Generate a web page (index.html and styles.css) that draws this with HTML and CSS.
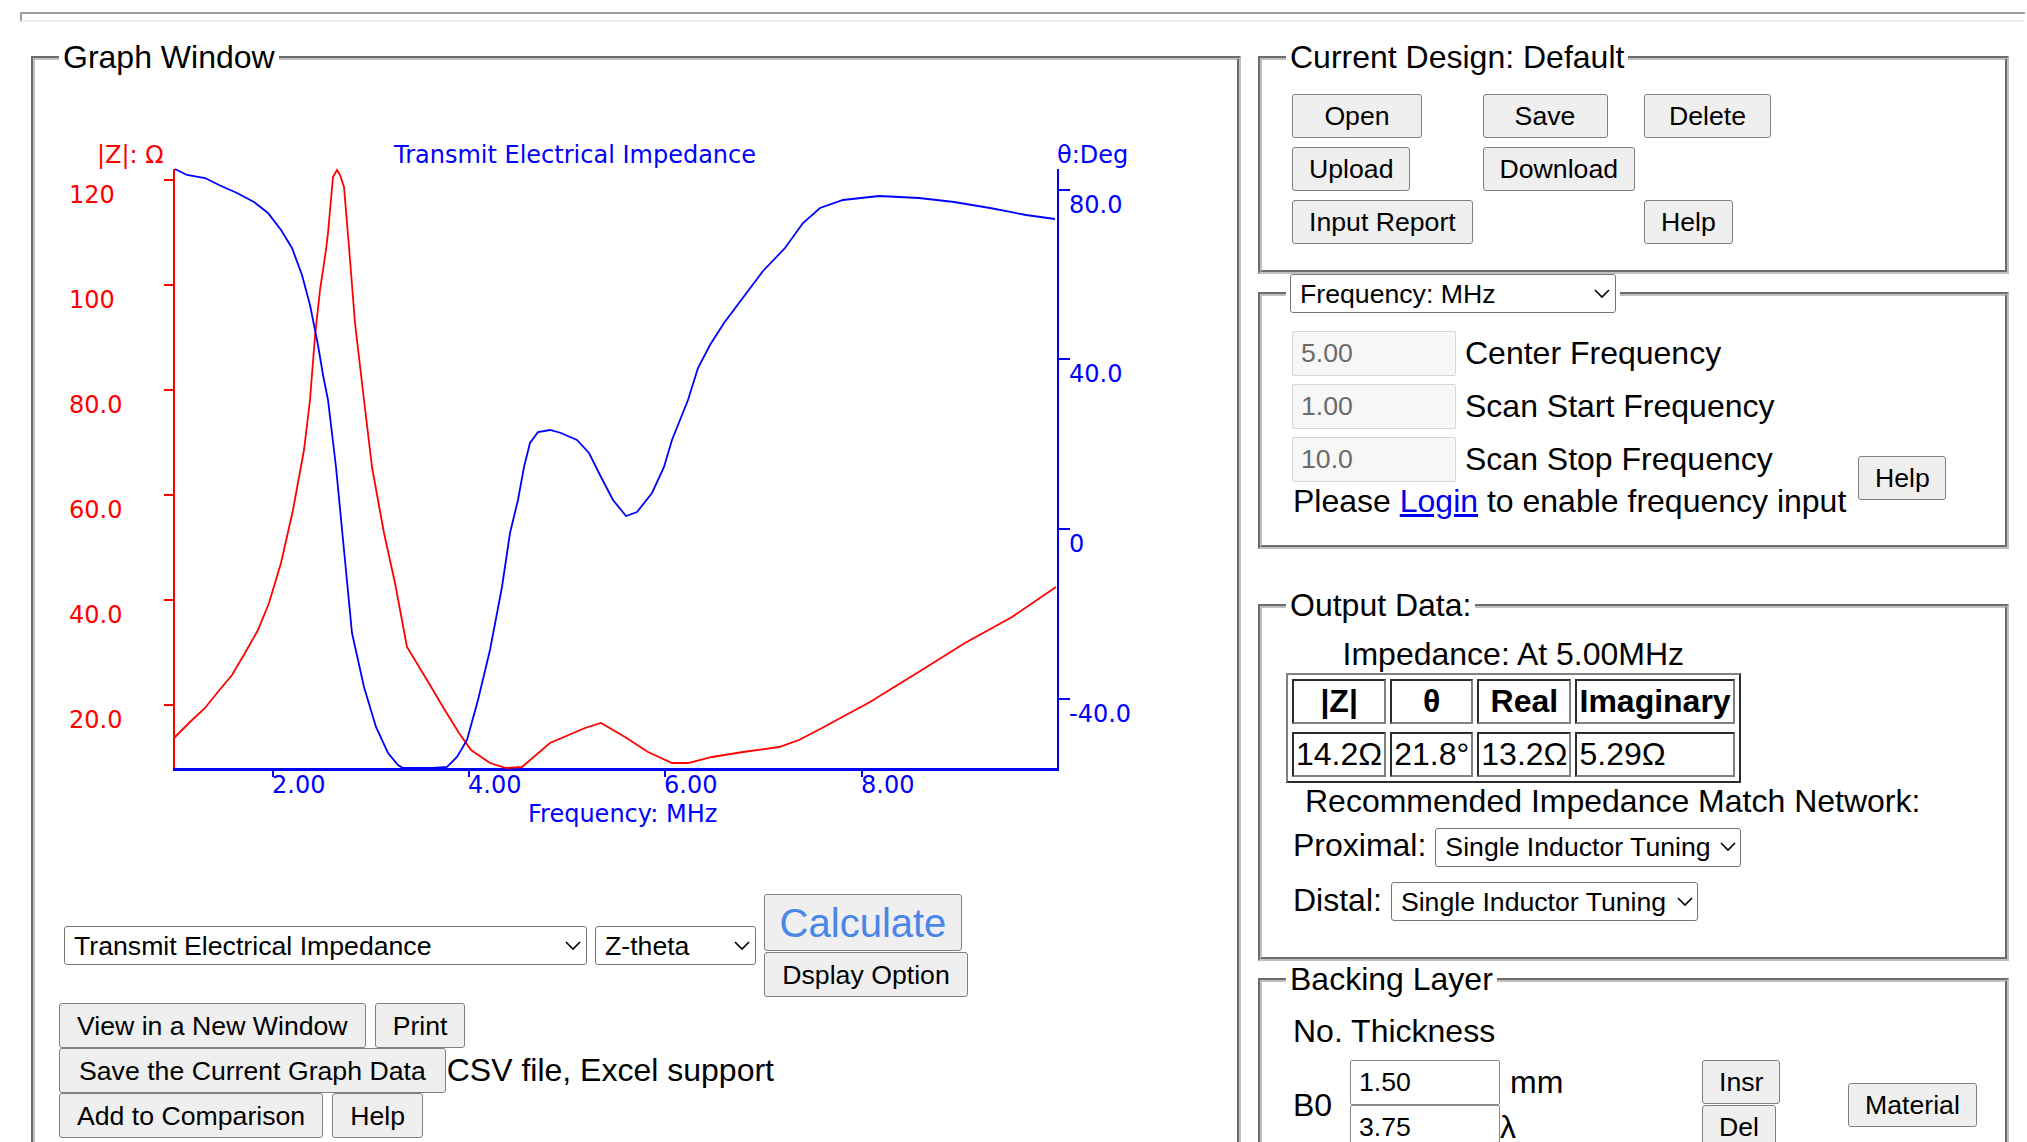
FILE: index.html
```html
<!DOCTYPE html>
<html>
<head>
<meta charset="utf-8">
<title>Transducer Design</title>
<link rel="stylesheet" href="styles.css">
</head>
<body>
<div class="topbar"></div>
<div class="main">
  <fieldset class="fs graphwin">
    <legend>Graph Window</legend>
    <svg class="graph" width="1154" height="801" viewBox="59 87 1154 801" xmlns="http://www.w3.org/2000/svg">
      <g class="gtext">
        <text x="97" y="163" fill="#ff0000">|Z|: Ω</text>
        <text x="394" y="163" fill="#0000ff">Transmit Electrical Impedance</text>
        <text x="1057" y="163" fill="#0000ff">θ:Deg</text>
        <g fill="#ff0000">
          <text x="69" y="203">120</text>
          <text x="69" y="308">100</text>
          <text x="69" y="413">80.0</text>
          <text x="69" y="518">60.0</text>
          <text x="69" y="623">40.0</text>
          <text x="69" y="728">20.0</text>
        </g>
        <g fill="#0000ff">
          <text x="1069" y="213">80.0</text>
          <text x="1069" y="382">40.0</text>
          <text x="1069" y="552">0</text>
          <text x="1069" y="722">-40.0</text>
          <text x="272" y="793">2.00</text>
          <text x="468" y="793">4.00</text>
          <text x="664" y="793">6.00</text>
          <text x="861" y="793">8.00</text>
          <text x="528" y="822">Frequency: MHz</text>
        </g>
      </g>
      <path d="M174 169V770M164 180H174M164 285H174M164 390H174M164 495H174M164 600H174M164 705H174" stroke="#ff0000" stroke-width="2" fill="none"/>
      <path d="M1058 169V770M1058 190H1070M1058 359H1070M1058 529H1070M1058 699H1070M273 769V777M469 769V777M665 769V777M862 769V777" stroke="#0000ff" stroke-width="2" fill="none"/>
      <path d="M173 769.5H1059" stroke="#0000ff" stroke-width="3" fill="none"/>
      <polyline fill="none" stroke="#ff0000" stroke-width="1.8" points="174,738 190,722 205,708 217,693 232,675 245,653 258,630 269,603 281,563 293,510 304,450 310,400 315,336 320,290 326,250 328,233 333,177 337,170 340,175 344,187 349,247 355,323 364,400 372,467 384,533 395,583 407,647 427,680 443,707 459,733 471,750 490,763 506,768 522,767 550,743 585,728 601,723 625,737 648,752 672,763 688,763 712,757 743,752 779,747 799,740 822,728 870,702 917,673 965,643 1012,617 1056,587"/>
      <polyline fill="none" stroke="#0000ff" stroke-width="1.8" points="175,169 187,175 205,178 219,185 237,193 254,202 268,213 281,230 292,248 302,275 310,305 318,345 323,375 328,400 336,467 344,550 352,633 364,687 376,727 388,753 398,765 403,768 433,768 447,767 457,757 467,740 478,700 490,650 502,587 510,533 518,500 524,467 530,443 538,432 550,430 561,433 577,440 589,453 601,477 613,500 626,516 637,512 652,493 664,467 672,440 680,420 688,400 698,368 710,345 724,323 745,295 763,271 785,248 803,223 820,208 843,200 879,196 919,198 954,202 990,208 1026,215 1055,219"/>
    </svg>
    <div class="ctrl">
      <select class="sel sel-type"><option>Transmit Electrical Impedance</option></select>
      <select class="sel sel-mode"><option>Z-theta</option></select>
      <div class="calc-col">
        <button class="btn calc">Calculate</button>
        <button class="btn dsp">Dsplay Option</button>
      </div>
    </div>
    <div class="brow"><button class="btn">View in a New Window</button><button class="btn">Print</button></div>
    <div class="brow tight"><button class="btn savebtn">Save the Current Graph Data</button><span>CSV file, Excel support</span></div>
    <div class="brow"><button class="btn">Add to Comparison</button><button class="btn">Help</button></div>
  </fieldset>

  <div class="rightcol">
    <fieldset class="fs cd">
      <legend>Current Design: Default</legend>
      <div class="cd-grid">
        <button class="btn bw130">Open</button>
        <button class="btn bw125">Save</button>
        <button class="btn bw127">Delete</button>
        <button class="btn">Upload</button>
        <button class="btn">Download</button>
        <span></span>
        <button class="btn">Input Report</button>
        <span></span>
        <button class="btn">Help</button>
      </div>
    </fieldset>

    <fieldset class="fs fq">
      <legend class="sel-legend"><select class="sel fsel"><option>Frequency: MHz</option></select></legend>
      <div class="fq-grid">
        <input class="inp dis" value="5.00" disabled>
        <span class="lab">Center Frequency</span>
        <input class="inp dis" value="1.00" disabled>
        <span class="lab">Scan Start Frequency</span>
        <input class="inp dis" value="10.0" disabled>
        <span class="lab">Scan Stop Frequency</span>
        <button class="btn fq-help">Help</button>
        <span class="login">Please <a href="#">Login</a> to enable frequency input</span>
      </div>
    </fieldset>

    <fieldset class="fs out">
      <legend>Output Data:</legend>
      <div class="ztbox">
        <div class="zcap">Impedance: At 5.00MHz</div>
        <div class="ztwrap">
          <table class="zt">
            <tr><th>|Z|</th><th>θ</th><th>Real</th><th>Imaginary</th></tr>
            <tr><td>14.2Ω</td><td>21.8°</td><td>13.2Ω</td><td>5.29Ω</td></tr>
          </table>
        </div>
      </div>
      <div class="rec">Recommended Impedance Match Network:</div>
      <div class="prow prox">Proximal: <select class="sel tsel"><option>Single Inductor Tuning</option></select></div>
      <div class="prow dist">Distal: <select class="sel tsel"><option>Single Inductor Tuning</option></select></div>
    </fieldset>

    <fieldset class="fs back">
      <legend>Backing Layer</legend>
      <div class="nth">No. Thickness</div>
      <div class="bk-grid">
        <span class="b0">B0</span>
        <div class="thick">
          <div class="tline"><input class="inp en" value="1.50"><span class="unit-mm">mm</span></div>
          <div class="tline"><input class="inp en" value="3.75"><span>λ</span></div>
        </div>
        <div class="insdel">
          <button class="btn">Insr</button>
          <button class="btn">Del</button>
        </div>
        <button class="btn mat">Material</button>
      </div>
    </fieldset>
  </div>
</div>
</body>
</html>
```

FILE: styles.css
```css
html, body {
  margin: 0;
  padding: 0;
  overflow: hidden;
  background: #ffffff;
}
body {
  font-family: "Liberation Sans", Arial, sans-serif;
  font-size: 32px;
  color: #000;
  width: 2027px;
  height: 1142px;
}
.topbar {
  margin: 12px 2px 0 20px;
  height: 6px;
  border-top: 2px solid #9e9e9e;
  border-left: 2px solid #9e9e9e;
  border-bottom: 2px solid #ececec;
}
.main {
  display: flex;
  align-items: flex-start;
  gap: 17px;
  margin-top: 17px;
  padding-left: 31px;
}
.fs {
  border: 4px groove #c0c0c0;
  margin: 0;
  padding: 11px 24px 20px;
  min-width: 0;
  box-sizing: border-box;
}
.fs legend {
  padding: 0 4px;
  line-height: 37px;
}
.graphwin {
  width: 1210px;
  flex: none;
}
.graph {
  display: block;
}
.gtext {
  font-family: "DejaVu Sans", Verdana, sans-serif;
  font-size: 24px;
}
.btn {
  font-family: "Liberation Sans", Arial, sans-serif;
  font-size: 26.6667px;
  line-height: 30px;
  height: 44px;
  padding: 0 16px;
  background: #efefef;
  color: #000;
  border: 1px solid #808080;
  border-radius: 3px;
  box-sizing: border-box;
  white-space: nowrap;
}
.sel {
  appearance: none;
  -webkit-appearance: none;
  font-family: "Liberation Sans", Arial, sans-serif;
  font-size: 26.6667px;
  height: 39px;
  box-sizing: border-box;
  border: 1px solid #767676;
  border-radius: 3px;
  padding: 0 28px 0 9px;
  color: #000;
  background: #fff url("data:image/svg+xml,%3Csvg xmlns='http://www.w3.org/2000/svg' width='16' height='10'%3E%3Cpath d='M1 1l7 7 7-7' fill='none' stroke='%23000' stroke-width='1.6'/%3E%3C/svg%3E") no-repeat right 5px center / 16px 10px;
}
.ctrl {
  display: flex;
  align-items: center;
  gap: 8px;
  padding: 6px 5px;
}
.sel-type { width: 523px; }
.sel-mode { width: 161px; }
.calc-col {
  display: flex;
  flex-direction: column;
  align-items: flex-start;
}
.calc {
  font-size: 40px;
  line-height: 46px;
  height: 57px;
  width: 198px;
  padding: 0;
  color: #4a86e8;
}
.dsp {
  margin-top: 1px;
  height: 45px;
  width: 204px;
  padding: 0;
}
.brow {
  display: flex;
  align-items: center;
  gap: 9px;
  height: 45px;
}
.brow .btn { height: 45px; padding: 0 17px; }
.brow .savebtn { padding: 0 19px; }
.brow.tight { gap: 1px; }

.rightcol {
  width: 751px;
  flex: none;
  display: flex;
  flex-direction: column;
}
.cd-grid {
  display: grid;
  grid-template-columns: 182px 153px 1fr;
  column-gap: 8.5px;
  row-gap: 9px;
  justify-items: start;
  padding: 7px 6px 6px;
}
.bw130 { width: 130px; }
.bw125 { width: 125px; }
.bw127 { width: 127px; }

.sel-legend { line-height: normal; }
.fsel {
  display: block;
  width: 326px;
}
.fq-grid {
  display: grid;
  grid-template-columns: 164px 386px auto;
  grid-template-rows: 45px 45px 45px 29px;
  column-gap: 8px;
  row-gap: 8px;
  padding: 7px 6px 6px;
  align-items: center;
}
.inp {
  font-family: "Liberation Sans", Arial, sans-serif;
  font-size: 26.6667px;
  box-sizing: border-box;
  padding: 0 8px;
  margin: 0;
}
.inp.dis {
  grid-column: 1;
  width: 164px;
  height: 45px;
  border: 1px solid #d6d6d6;
  border-radius: 2px;
  background: #f7f7f7;
  color: #6b6b6b;
}
.lab {
  grid-column: 2;
  line-height: 45px;
  padding-left: 1px;
  white-space: nowrap;
}
.fq-help {
  grid-column: 3;
  grid-row: 3 / span 2;
  align-self: center;
  justify-self: start;
  width: 88px;
}
.login {
  grid-column: 1 / span 2;
  grid-row: 4;
  align-self: start;
  margin-top: -3px;
  line-height: 29px;
  white-space: nowrap;
  padding-left: 1px;
}
.login a {
  color: #0000ee;
  text-decoration: underline;
}

.out {
  margin-top: 38px;
  padding-bottom: 36px;
}
.ztbox {
  width: max-content;
}
.zcap {
  text-align: center;
  line-height: 38px;
}
.ztwrap {
  border: 2px outset #808080;
}
.zt {
  border-collapse: separate;
  border-spacing: 4px 8px;
  margin: -4px 0;
}
.zt th, .zt td {
  border: 2px inset #808080;
  padding: 2px;
  line-height: 37px;
}
.zt th {
  font-weight: bold;
  text-align: center;
}
.zt td {
  text-align: left;
}
.rec {
  padding-left: 19px;
  line-height: 37px;
}
.prow {
  display: flex;
  align-items: baseline;
  gap: 9px;
  line-height: 37px;
  padding-left: 7px;
}
.prox { margin-top: 7px; }
.dist { margin-top: 15px; }
.tsel {
  padding-right: 30px;
  background-position: right 4px center;
}
.prox .tsel { width: 306px; }
.dist .tsel { width: 307px; }

.nth {
  line-height: 37px;
  padding-left: 7px;
  margin-top: 4px;
}
.bk-grid {
  display: grid;
  grid-template-columns: 50px 344px 138px auto;
  column-gap: 8px;
  padding: 10px 6px 0;
}
.b0 {
  align-self: center;
  padding-left: 1px;
}
.thick {
  display: flex;
  flex-direction: column;
}
.tline {
  display: flex;
  align-items: center;
  height: 45px;
}
.inp.en {
  width: 150px;
  height: 45px;
  border: 1px solid #8a8a8a;
  border-radius: 2px;
  background: #fff;
  color: #000;
}
.unit-mm { margin-left: 10px; }
.insdel {
  display: flex;
  flex-direction: column;
  align-items: flex-start;
  gap: 1px;
}
.mat {
  align-self: center;
  justify-self: start;
}
```
